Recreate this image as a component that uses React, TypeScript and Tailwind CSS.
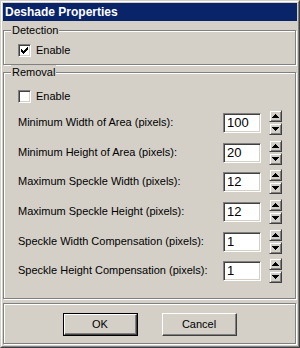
import React from "react";

const sunken =
  "border border-t-[#808080] border-l-[#808080] border-b-white border-r-white shadow-[inset_1px_1px_0_#404040,inset_-1px_-1px_0_#d4d0c8]";
const raised =
  "border border-t-[#d4d0c8] border-l-[#d4d0c8] border-b-[#404040] border-r-[#404040] shadow-[inset_1px_1px_0_#ffffff,inset_-1px_-1px_0_#808080]";
const etched =
  "border border-[#808080] shadow-[inset_1px_1px_0_#ffffff,1px_1px_0_#ffffff]";

function CheckBox({ checked }: { checked: boolean }) {
  return (
    <div className={`w-[13px] h-[13px] bg-white flex items-center justify-center ${sunken}`}>
      {checked && (
        <svg width="7" height="7" viewBox="0 0 7 7" shapeRendering="crispEdges">
          <path d="M0 2 L2 4 L6 0 L7 0 L7 3 L2 7 L0 5 Z" fill="#000" />
        </svg>
      )}
    </div>
  );
}

function Group({
  label,
  className,
  children,
}: {
  label?: string;
  className: string;
  children: React.ReactNode;
}) {
  return (
    <div className={`relative ${etched} ${className}`}>
      {label && (
        <div className="absolute left-[7px] top-[-8px] px-px bg-[#d4d0c8] leading-[14px]">
          {label}
        </div>
      )}
      {children}
    </div>
  );
}

function Spinner() {
  return (
    <div className="flex flex-col gap-px">
      <div className={`w-[13px] h-[12px] bg-[#d4d0c8] flex items-center justify-center ${raised}`}>
        <svg width="7" height="4" viewBox="0 0 7 4" shapeRendering="crispEdges">
          <path d="M3.5 0 L7 4 L0 4 Z" fill="#000" />
        </svg>
      </div>
      <div className={`w-[13px] h-[12px] bg-[#d4d0c8] flex items-center justify-center ${raised}`}>
        <svg width="7" height="4" viewBox="0 0 7 4" shapeRendering="crispEdges">
          <path d="M0 0 L7 0 L3.5 4 Z" fill="#000" />
        </svg>
      </div>
    </div>
  );
}

const rows = [
  { label: "Minimum Width of Area (pixels):", value: "100", h: "h-[30px]" },
  { label: "Minimum Height of Area (pixels):", value: "20", h: "h-[29px]" },
  { label: "Maximum Speckle Width (pixels):", value: "12", h: "h-[30px]" },
  { label: "Maximum Speckle Height (pixels):", value: "12", h: "h-[30px]" },
  { label: "Speckle Width Compensation (pixels):", value: "1", h: "h-[29px]" },
  { label: "Speckle Height Compensation (pixels):", value: "1", h: "h-[30px]" },
];

function PushButton({ label, isDefault }: { label: string; isDefault?: boolean }) {
  if (isDefault) {
    return (
      <div className="w-[75px] h-[23px] border border-black">
        <div
          className={`w-full h-full bg-[#d4d0c8] flex items-center justify-center border border-t-white border-l-white border-b-[#404040] border-r-[#404040] shadow-[inset_-1px_-1px_0_#808080]`}
        >
          {label}
        </div>
      </div>
    );
  }
  return (
    <div
      className={`w-[75px] h-[23px] bg-[#d4d0c8] flex items-center justify-center border border-t-white border-l-white border-b-[#404040] border-r-[#404040] shadow-[inset_-1px_-1px_0_#808080]`}
    >
      {label}
    </div>
  );
}

export default function App() {
  return (
    <div className="w-[300px] h-[348px] bg-[#d4d0c8] border border-t-[#d4d0c8] border-l-[#d4d0c8] border-b-[#404040] border-r-[#404040] font-['Liberation_Sans',Arial,sans-serif] text-[11px] text-black">
      <div className="h-full border border-t-white border-l-white border-b-[#808080] border-r-[#808080] p-px flex flex-col">
        <div className="h-[18px] shrink-0 bg-[#0a246a] text-white font-bold text-[12px] pl-[2px] flex items-center">
          Deshade Properties
        </div>
        <div className="flex flex-col pt-[9px] pr-px">
          <Group label="Detection" className="h-[35px]">
            <div className="flex items-center pl-[14px] pt-[11px] gap-[5px]">
              <CheckBox checked />
              <span>Enable</span>
            </div>
          </Group>
          <Group label="Removal" className="h-[227px] mt-[7px]">
            <div className="flex items-center pl-[14px] pt-[15px] gap-[5px]">
              <CheckBox checked={false} />
              <span>Enable</span>
            </div>
            <div className="flex flex-col pt-[8px]">
              {rows.map((r) => (
                <div key={r.label} className={`flex items-start ${r.h}`}>
                  <div className="flex-1 pl-[14px] h-[20px] flex items-center">{r.label}</div>
                  <div
                    className={`w-[38px] h-[20px] bg-white flex items-center pl-[3px] text-[13px] ${sunken}`}
                  >
                    {r.value}
                  </div>
                  <div className="ml-[8px] mr-[13px] -mt-[3px]">
                    <Spinner />
                  </div>
                </div>
              ))}
            </div>
          </Group>
          <Group className="h-[41px] mt-[4px]">
            <div className="flex justify-center gap-[24px] pt-[9px]">
              <PushButton label="OK" isDefault />
              <PushButton label="Cancel" />
            </div>
          </Group>
        </div>
      </div>
    </div>
  );
}
